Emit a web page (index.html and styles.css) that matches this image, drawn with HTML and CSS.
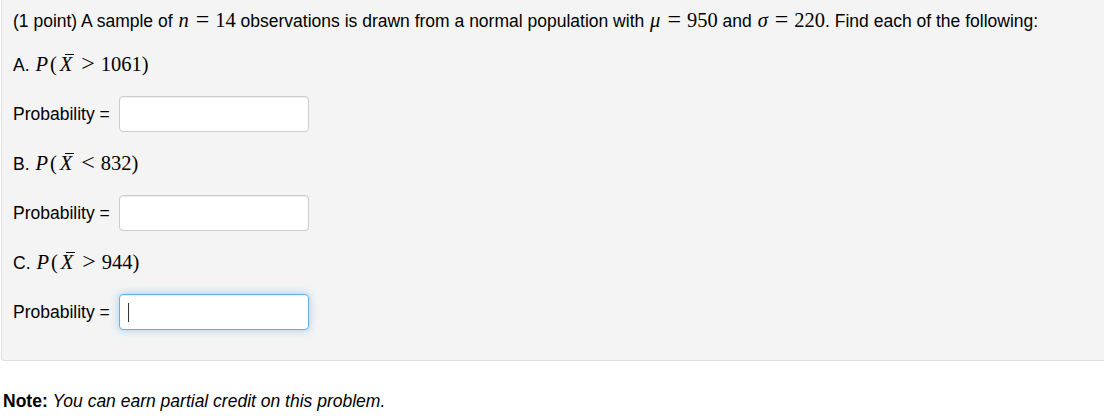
FILE: index.html
```html
<!DOCTYPE html>
<html lang="en">
<head>
<meta charset="utf-8">
<title>Problem 7</title>
<link rel="stylesheet" href="styles.css">
</head>
<body>
    <div class="problem">
        <p class="intro">(1 point) A sample of <span class="math"><span class="mi">n</span><span class="mo">=</span>14</span> observations is drawn from a normal population with <span class="math"><span class="mi">&mu;</span><span class="mo">=</span>950</span> and <span class="math"><span class="mi">&sigma;</span><span class="mo">=</span>220</span>. Find each of the following:</p>

        <div class="part">
            <p class="part-title">A. <span class="math"><span class="mi big">P</span>(<span class="mi xbar">X</span><span class="mo">&gt;</span>1061)</span></p>
            <div class="answer">
                <label for="ans1">Probability =</label>
                <input id="ans1" class="answer-box" type="text">
            </div>
        </div>

        <div class="part">
            <p class="part-title">B. <span class="math"><span class="mi big">P</span>(<span class="mi xbar">X</span><span class="mo">&lt;</span>832)</span></p>
            <div class="answer">
                <label for="ans2">Probability =</label>
                <input id="ans2" class="answer-box" type="text">
            </div>
        </div>

        <div class="part">
            <p class="part-title">C. <span class="math"><span class="mi big">P</span>(<span class="mi xbar">X</span><span class="mo">&gt;</span>944)</span></p>
            <div class="answer">
                <label for="ans3">Probability =</label>
                <span class="answer-box focused"></span>
            </div>
        </div>
    </div>

    <p class="note"><b>Note:</b> <i>You can earn partial credit on this problem.</i></p>
</body>
</html>
```

FILE: styles.css
```css
@charset "utf-8";

* {
    margin: 0;
    box-sizing: border-box;
}

body {
    background: #ffffff;
    color: #000000;
    font-family: "Liberation Sans", Arial, sans-serif;
    font-size: 17.5px;
    line-height: 24px;
    padding-left: 1px;
    overflow: hidden;
}

.problem {
    background: #f4f4f4;
    border: 1px solid #dedede;
    border-top: none;
    border-radius: 0 0 4px 4px;
    margin-right: -20px;
    padding: 9px 11px 30px;
}

.part {
    margin-top: 20px;
}

.math {
    font-family: "Liberation Serif", "Times New Roman", serif;
    font-size: 20.5px;
    line-height: 20px;
    white-space: nowrap;
}

.mi {
    font-style: italic;
    padding: 0 1px;
}

.mi.big {
    padding-right: 2px;
}

.mo {
    font-size: 24px;
    margin: 0 6px;
}

.xbar {
    position: relative;
    padding: 0 3px 0 3px;
}

.xbar::before {
    content: "";
    position: absolute;
    left: 8px;
    width: 9px;
    top: 1px;
    border-top: 1px solid #000;
}

.answer {
    display: flex;
    align-items: center;
    gap: 9px;
    margin-top: 19px;
}

.answer-box {
    display: block;
    width: 190px;
    height: 36px;
    background: #ffffff;
    border: 1px solid #cccccc;
    border-radius: 4px;
    box-shadow: inset 0 1px 1px rgba(0, 0, 0, .075);
    font: inherit;
    padding: 6px 8px;
}

.answer-box.focused {
    position: relative;
    border-color: #66afe9;
    box-shadow: inset 0 1px 1px rgba(0, 0, 0, .075), 0 0 8px rgba(102, 175, 233, .6);
}

/* text caret */
.answer-box.focused::after {
    content: "";
    position: absolute;
    left: 8px;
    top: 8px;
    height: 19px;
    border-left: 1px solid #333;
}

.note {
    margin-top: 28px;
    padding-left: 2px;
}
```
